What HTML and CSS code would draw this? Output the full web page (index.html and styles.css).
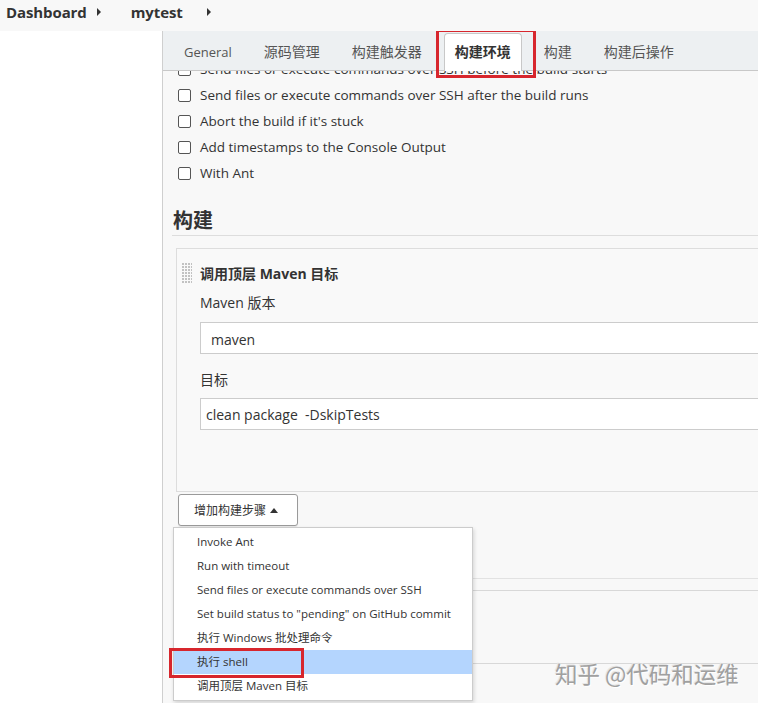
FILE: index.html
```html
<!DOCTYPE html>
<html lang="zh-CN">
<head>
<meta charset="utf-8">
<title>mytest Config</title>
<link rel="stylesheet" href="styles.css">
</head>
<body>
<div class="crumbs">
  <span class="crumb">Dashboard</span>
  <svg class="caret caret-1" width="4" height="8" viewBox="0 0 4 8"><path d="M0 0 L4 4 L0 8 Z" fill="#333"/></svg>
  <span class="crumb">mytest</span>
  <svg class="caret caret-2" width="4" height="8" viewBox="0 0 4 8"><path d="M0 0 L4 4 L0 8 Z" fill="#333"/></svg>
</div>
<div class="main">
  <div class="side"></div>
  <div class="panel">
    <div class="tabs">
      <span class="tab"><span class="latin">General</span></span>
      <span class="tab">源码管理</span>
      <span class="tab">构建触发器</span>
      <span class="tab active">构建环境<span class="mark mark-tab"></span></span>
      <span class="tab">构建</span>
      <span class="tab">构建后操作</span>
    </div>
    <div class="content">
      <div class="rows">
        <div class="row"><span class="cb"></span><span>Send files or execute commands over SSH before the build starts</span></div>
        <div class="row"><span class="cb"></span><span>Send files or execute commands over SSH after the build runs</span></div>
        <div class="row"><span class="cb"></span><span>Abort the build if it's stuck</span></div>
        <div class="row"><span class="cb"></span><span>Add timestamps to the Console Output</span></div>
        <div class="row"><span class="cb"></span><span>With Ant</span></div>
      </div>
      <h2 class="section-title">构建</h2>
      <div class="step">
        <div class="step-head"><span class="handle"></span><span class="step-name">调用顶层 Maven 目标</span></div>
        <div class="label label-first">Maven 版本</div>
        <div class="field select-field">maven</div>
        <div class="label">目标</div>
        <div class="field text-field">clean package &nbsp;-DskipTests</div>
      </div>
      <div class="add-wrap">
        <button class="add-btn">增加构建步骤 <svg width="8" height="5" viewBox="0 0 8 5"><path d="M0 5 L4 0 L8 5 Z" fill="#333"/></svg></button>
        <ul class="menu">
          <li>Invoke Ant</li>
          <li>Run with timeout</li>
          <li>Send files or execute commands over SSH</li>
          <li>Set build status to "pending" on GitHub commit</li>
          <li>执行 Windows 批处理命令</li>
          <li class="hl">执行 shell<span class="mark mark-item"></span></li>
          <li>调用顶层 Maven 目标</li>
        </ul>
      </div>
      <div class="after-a"></div>
      <div class="after-b"></div>
    </div>
  </div>
</div>
<div class="watermark">知乎 @代码和运维</div>
</body>
</html>
```
FILE: styles.css
```css
html, body {
  margin: 0;
  padding: 0;
  overflow: hidden;
  width: 758px;
  height: 703px;
}
body {
  font-family: "Open Sans", "Noto Sans CJK SC", sans-serif;
  color: #333;
  background: #fff;
  position: relative;
}
.crumbs {
  height: 31px;
  box-sizing: border-box;
  background: #f8f8f8;
  display: flex;
  align-items: center;
  padding: 0 0 7px 6px;
}
.crumb {
  font-weight: 700;
  font-size: 15px;
  line-height: 20px;
  color: #333;
  letter-spacing: -0.1px;
}
.caret {
  flex: none;
}
.caret-1 {
  margin: 0 30px 0 10px;
}
.caret-2 {
  margin: 0 0 0 24px;
}
.main {
  display: flex;
  height: 672px;
}
.side {
  width: 162px;
  flex: none;
  background: #fff;
}
.panel {
  flex: none;
  width: 700px;
  border-left: 1px solid #cfcfcf;
  background: #f8f8f8;
  display: flex;
  flex-direction: column;
  overflow: hidden;
}
.tabs {
  height: 39px;
  flex: none;
  background: #edf0f2;
  border-bottom: 1px solid #c8c8c8;
  display: flex;
  align-items: flex-end;
  padding-left: 11px;
  gap: 12px;
  position: relative;
  z-index: 2;
}
.tab {
  position: relative;
  height: 37px;
  line-height: 37px;
  padding: 0 10px;
  font-size: 14px;
  color: #555;
  box-sizing: border-box;
}
.tab .latin {
  font-size: 13px;
}
.tab.active {
  background: #fff;
  border: 1px solid #c8c8c8;
  border-bottom: none;
  border-radius: 4px 4px 0 0;
  font-weight: 700;
  color: #333;
  height: 38px;
  margin-bottom: -1px;
  line-height: 36px;
  padding: 0 10px;
}
.mark {
  position: absolute;
  border: 3px solid #d7262d;
  box-sizing: border-box;
  pointer-events: none;
}
.mark-tab {
  left: -9px;
  top: -5px;
  width: 100px;
  height: 49px;
}
.content {
  flex: 1;
  overflow: hidden;
  position: relative;
}
.rows {
  margin-top: -15px;
}
.row {
  height: 26px;
  display: flex;
  align-items: center;
  padding-left: 15px;
  font-size: 13.5px;
  color: #333;
}
.cb {
  width: 11px;
  height: 11px;
  border: 1px solid #555;
  border-radius: 2px;
  background: #fff;
  margin-right: 9px;
  flex: none;
}
.section-title {
  margin: 20px 0 0 9px;
  padding-left: 1px;
  font-size: 20px;
  font-weight: 700;
  line-height: 29px;
  height: 29px;
  border-bottom: 1px solid #ddd;
  color: #333;
}
.step {
  margin: 12px 0 0 13px;
  border: 1px solid #ddd;
  background: #f9f9f9;
  padding: 14px 0 61px 23px;
}
.step-head {
  display: flex;
  align-items: center;
  margin-left: -18px;
  height: 20px;
}
.handle {
  width: 10px;
  height: 21px;
  margin-right: 8px;
  background-image: radial-gradient(circle at 1px 1px, #c2c2c2 0.8px, transparent 1px);
  background-size: 3px 3px;
}
.step-name {
  font-weight: 700;
  font-size: 14px;
}
.label {
  font-size: 14px;
  line-height: 20px;
  margin-top: 16px;
}
.label-first {
  margin-top: 10px;
}
.field {
  margin-top: 9px;
  height: 30px;
  line-height: 30px;
  background: #fff;
  border: 1px solid #ccc;
  font-size: 14px;
  color: #333;
  box-sizing: content-box;
}
.select-field {
  padding-left: 10px;
  line-height: 33px;
}
.text-field {
  margin-top: 8px;
  padding-left: 5px;
  line-height: 31px;
}
.add-wrap {
  position: relative;
  margin: 2px 0 0 15px;
  height: 32px;
}
.add-btn {
  width: 120px;
  height: 32px;
  background: #fff;
  border: 1px solid #9a9a9a;
  border-radius: 3px;
  box-shadow: 0 1px 1px rgba(0,0,0,0.08);
  font-family: "Open Sans", "Noto Sans CJK SC", sans-serif;
  font-size: 12px;
  color: #333;
  padding: 0 4px 0 0;
  display: flex;
  align-items: center;
  justify-content: center;
  gap: 4px;
}
.menu {
  position: absolute;
  z-index: 3;
  left: -5px;
  top: 33px;
  width: 298px;
  margin: 0;
  padding: 2px 0 2px;
  list-style: none;
  background: #fff;
  border: 1px solid #ccc;
  box-shadow: 1px 2px 4px rgba(0,0,0,0.15);
}
.menu li {
  position: relative;
  height: 24px;
  line-height: 24px;
  padding-left: 23px;
  font-size: 11.5px;
  color: #333;
}
.menu li.hl {
  background: #b4d5fe;
}
.mark-item {
  left: -5px;
  top: -2px;
  width: 135px;
  height: 30px;
}
.after-a {
  margin-left: 13px;
  height: 52px;
  border-bottom: 1px solid #e2e2e2;
}
.after-b {
  margin: 11px 0 0 13px;
  height: 72px;
  border-top: 1px solid #d8d8d8;
  border-bottom: 1px solid #d8d8d8;
}
.watermark {
  position: absolute;
  left: 555px;
  top: 657px;
  font-family: "Noto Sans CJK SC", sans-serif;
  font-size: 22.5px;
  color: #a0a0a0;
  text-shadow: 1px 1px 0 #fff, -1px -1px 0 #e6e6e6;
  z-index: 5;
}
```
